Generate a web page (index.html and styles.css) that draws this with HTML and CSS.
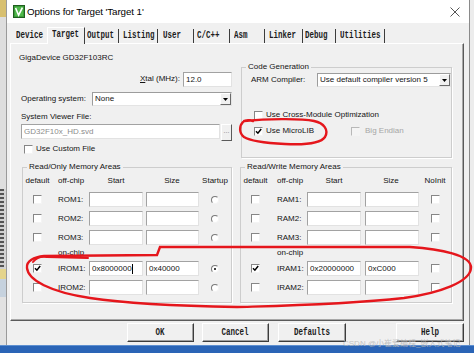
FILE: index.html
```html
<!DOCTYPE html>
<html lang="en">
<head>
<meta charset="utf-8">
<title>Options for Target 'Target 1'</title>
<link rel="stylesheet" href="styles.css">
</head>
<body>
<div class="screen">
  <div class="main">
    <div class="lstrip">
      <div class="ls-a"></div>
      <div class="ls-b"></div>
      <div class="ls-c"></div>
      <div class="ls-d"></div>
      <div class="ls-e"></div>
      <div class="ls-f"></div>
    </div>
    <div class="dialog">
      <div class="titlebar">
        <svg class="appicon" width="12" height="13" viewBox="0 0 12 13">
          <rect x="0.5" y="0.5" width="11" height="12" fill="#3c9c3a" stroke="#1f5f1f"/>
          <rect x="2" y="2" width="8" height="9" fill="#4fb84a"/>
          <path d="M2.6 3 L5.6 10.2 L9.4 2.6" fill="none" stroke="#fff" stroke-width="1.6"/>
        </svg>
        <span class="title">Options for Target 'Target 1'</span>
        <svg class="close" width="10" height="10" viewBox="0 0 10 10">
          <path d="M0.5 0.5 L9.5 9.5 M9.5 0.5 L0.5 9.5" stroke="#555" stroke-width="1"/>
        </svg>
      </div>
      <div class="body">
        <div class="tabs">
          <div class="tab t-device"><span class="mono">Device</span></div>
          <div class="tab sel t-target"><span class="mono">Target</span></div>
          <div class="tab t-output"><span class="mono">Output</span></div>
          <div class="tab t-listing"><span class="mono">Listing</span></div>
          <div class="tab t-user"><span class="mono">User</span></div>
          <div class="tab t-cpp"><span class="mono">C/C++</span></div>
          <div class="tab t-asm"><span class="mono">Asm</span></div>
          <div class="tab t-linker"><span class="mono">Linker</span></div>
          <div class="tab t-debug"><span class="mono">Debug</span></div>
          <div class="tab t-util"><span class="mono">Utilities</span></div>
        </div>
        <div class="panel">
          <div class="top">
            <div class="leftcol">
              <div class="device">GigaDevice GD32F103RC</div>
              <div class="xtal-row">
                <span><span class="u">X</span>tal (MHz):</span>
                <div class="in xtal">12.0</div>
              </div>
              <div class="os-row">
                <span class="oslabel">Operating system:</span>
                <div class="combo os"><span class="ctext">None</span><span class="drop"><svg width="5" height="3" viewBox="0 0 5 3"><path d="M0 0 H5 L2.5 3 Z" fill="#000"/></svg></span></div>
              </div>
              <div class="svf-label">System Viewer File:</div>
              <div class="svf-row">
                <div class="in svf">GD32F10x_HD.svd</div>
                <div class="dots">...</div>
              </div>
              <div class="chk-row custom">
                <span class="cb"></span><span>Use Custom File</span>
              </div>
            </div>
            <fieldset class="codegen">
              <legend>Code Generation</legend>
              <div class="arm-row">
                <span class="armlabel">ARM Compiler:</span>
                <div class="combo arm"><span class="ctext">Use default compiler version 5</span><span class="drop"><svg width="5" height="3" viewBox="0 0 5 3"><path d="M0 0 H5 L2.5 3 Z" fill="#000"/></svg></span></div>
              </div>
              <div class="chk-row cross">
                <span class="cb"></span><span>Use Cross-Module Optimization</span>
              </div>
              <div class="chk-row micro">
                <span class="cb on"><svg width="7" height="7" viewBox="0 0 7 7"><path d="M1 3.2 L2.9 5.2 L6.2 1" fill="none" stroke="#000" stroke-width="1.5"/></svg></span><span>Use MicroLIB</span>
                <span class="big"><span class="cb dis"></span><span class="distext">Big Endian</span></span>
              </div>
            </fieldset>
          </div>
          <div class="groups">
            <fieldset class="grp">
              <legend>Read/Only Memory Areas</legend>
              <div class="mem ro">
                <span class="hd c">default</span><span class="hd lbl">off-chip</span><span class="hd c">Start</span><span class="hd c sz">Size</span><span class="hd c">Startup</span>

                <span class="cell"><span class="cb"></span></span><span class="lbl">ROM1:</span><div class="in"></div><div class="in size"></div><span class="cell"><span class="rb"></span></span>
                <span class="cell"><span class="cb"></span></span><span class="lbl">ROM2:</span><div class="in"></div><div class="in size"></div><span class="cell"><span class="rb"></span></span>
                <span class="cell"><span class="cb"></span></span><span class="lbl">ROM3:</span><div class="in"></div><div class="in size"></div><span class="cell"><span class="rb"></span></span>
                <span class="lbl onchip">on-chip</span>
                <span class="cell"><span class="cb on"><svg width="7" height="7" viewBox="0 0 7 7"><path d="M1 3.2 L2.9 5.2 L6.2 1" fill="none" stroke="#000" stroke-width="1.5"/></svg></span></span><span class="lbl">IROM1:</span><div class="in">0x8000000<span class="caret"></span></div><div class="in size">0x40000</div><span class="cell"><span class="rb on"><span class="dot"></span></span></span>
                <span class="cell"><span class="cb"></span></span><span class="lbl">IROM2:</span><div class="in"></div><div class="in size"></div><span class="cell"><span class="rb"></span></span>
              </div>
            </fieldset>
            <fieldset class="grp">
              <legend>Read/Write Memory Areas</legend>
              <div class="mem rw">
                <span class="hd c">default</span><span class="hd lbl">off-chip</span><span class="hd c">Start</span><span class="hd c sz">Size</span><span class="hd c">NoInit</span>

                <span class="cell"><span class="cb"></span></span><span class="lbl">RAM1:</span><div class="in"></div><div class="in size"></div><span class="cell"><span class="cb"></span></span>
                <span class="cell"><span class="cb"></span></span><span class="lbl">RAM2:</span><div class="in"></div><div class="in size"></div><span class="cell"><span class="cb"></span></span>
                <span class="cell"><span class="cb"></span></span><span class="lbl">RAM3:</span><div class="in"></div><div class="in size"></div><span class="cell"><span class="cb"></span></span>
                <span class="lbl onchip">on-chip</span>
                <span class="cell"><span class="cb on"><svg width="7" height="7" viewBox="0 0 7 7"><path d="M1 3.2 L2.9 5.2 L6.2 1" fill="none" stroke="#000" stroke-width="1.5"/></svg></span></span><span class="lbl">IRAM1:</span><div class="in">0x20000000</div><div class="in size">0xC000</div><span class="cell"><span class="cb"></span></span>
                <span class="cell"><span class="cb"></span></span><span class="lbl">IRAM2:</span><div class="in"></div><div class="in size"></div><span class="cell"><span class="cb"></span></span>
              </div>
            </fieldset>
          </div>
        </div>
        <div class="buttons">
          <div class="btn b-ok"><span class="mono">OK</span></div>
          <div class="btn b-cancel"><span class="mono">Cancel</span></div>
          <div class="btn b-def"><span class="mono">Defaults</span></div>
          <div class="btn b-help"><span class="mono">Help</span></div>
        </div>
      </div>
    </div>
    <div class="rstrip"></div>
  </div>
  <div class="taskbar"></div>

  <svg class="marks" width="474" height="353" viewBox="0 0 474 353">
    <path d="M244 121 C265 119 300 118 314 121 C324 123 329 130 325 137 C321 143 305 145 285 144 C265 143 250 141 244 137 C239 133 239 126 243 122 C246 119 250 120 253 121" fill="none" stroke="#e5161c" stroke-width="2.4" stroke-linecap="round"/>
    <path d="M44 256 L157 255 L160 247 L410 247 C440 249 472 255 471 268 C470 282 440 293 404 298 C340 305 270 306 237 307 C180 306 130 304 90 298 C50 292 28 280 27 268 C26 261 34 257 44 256" fill="none" stroke="#e5161c" stroke-width="2.4" stroke-linecap="round"/>
    <path d="M33 262 C36 258 40 256 47 257 L88 258" fill="none" stroke="#e5161c" stroke-width="2" stroke-linecap="round"/>
  </svg>
  <div class="watermark">CSDN @小崔爱编程_嵌入式笔记</div>
</div>
</body>
</html>
```

FILE: styles.css
```css
* { box-sizing: border-box; }

html, body {
  margin: 0;
  padding: 0;
}

body {
  width: 474px;
  height: 353px;
  overflow: hidden;
  font-family: "Liberation Sans", Arial, sans-serif;
  font-size: 8px;
  line-height: 10px;
  color: #141414;
  background: #e6e6e6;
}

.screen {
  position: relative;
  width: 474px;
  height: 353px;
}

.main {
  display: flex;
  height: 345px;
}

/* left desktop strip */
.lstrip {
  width: 6px;
  display: flex;
  flex-direction: column;
  background: #d4d4d4;
}
.ls-a { height: 17px; background: #d8c070; }
.ls-b { height: 172px; background: #dedede; }
.ls-c {
  height: 80px;
  background: repeating-linear-gradient(to bottom, #555 0 2px, #cfcfcf 2px 4px);
  width: 4px;
}
.ls-d { height: 10px; background: #e4d48c; }
.ls-e { height: 18px; background: #c6d2de; }
.ls-f { flex: 1; background: #e2e2e2; }

.rstrip {
  width: 4px;
  background: #ececec;
}

/* dialog */
.dialog {
  width: 464px;
  display: flex;
  flex-direction: column;
  border-left: 1px solid #9a9a9a;
  border-right: 1px solid #8a8a8a;
  background: #f0f0f0;
}

.titlebar {
  height: 23px;
  background: #fff;
  display: flex;
  align-items: center;
  padding-left: 6px;
}
.appicon { display: block; margin-top: -1px; }
.title {
  margin-left: 2px;
  font-size: 9.8px;
  color: #000;
  letter-spacing: -0.1px;
}
.close {
  margin-left: auto;
  margin-right: 9px;
}

.body {
  flex: 1;
  display: flex;
  flex-direction: column;
}

/* tabs */
.tabs {
  height: 20px;
  display: flex;
  align-items: flex-end;
  padding-left: 5px;
}
.tab {
  height: 14px;
  padding-left: 4px;
  border-right: 1px solid #3c3c3c;
  display: flex;
  align-items: center;
  overflow: hidden;
}
.tab.sel {
  height: 17px;
  border-left: 1px solid #fff;
  border-top: 1px solid #fff;
  margin-bottom: -1px;
  position: relative;
  z-index: 1;
  background: #f0f0f0;
  align-items: flex-start;
  padding-top: 2px;
}
.t-device { width: 35px; border-right: none; }
.t-target { width: 38px; }
.t-output { width: 34px; padding-left: 2px; }
.t-listing { width: 39px; }
.t-user { width: 36px; padding-left: 5px; }
.t-cpp { width: 36px; padding-left: 3px; }
.t-asm { width: 35px; }
.t-linker { width: 38px; }
.t-debug { width: 33px; padding-left: 2px; }
.t-util { width: 49px; }

.mono {
  display: inline-block;
  font-family: "Liberation Mono", "DejaVu Sans Mono", monospace;
  font-weight: bold;
  font-size: 10px;
  line-height: 10px;
  color: #1c1c1c;
  transform: scaleX(0.75);
  transform-origin: left center;
  white-space: nowrap;
}

/* panel */
.panel {
  margin-left: 3px;
  width: 454px;
  height: 278px;
  border-top: 1px solid #fff;
  border-left: 1px solid #fff;
  border-right: 1px solid #5a5a5a;
  border-bottom: 1px solid #5a5a5a;
  box-shadow: inset -1px -1px 0 #a8a8a8;
}

.top {
  height: 118px;
  display: grid;
  grid-template-columns: 213px 211px;
  column-gap: 9px;
  padding-left: 8px;
}

.leftcol {
  display: flex;
  flex-direction: column;
}
.device {
  margin-top: 9px;
  height: 10px;
}
.xtal-row {
  margin-top: 9px;
  height: 14px;
  display: flex;
  align-items: center;
  justify-content: flex-end;
  gap: 3px;
}
.u { text-decoration: underline; }
.xtal { width: 49px; height: 14px; }

.os-row {
  margin-top: 6px;
  height: 14px;
  display: flex;
  align-items: center;
}
.oslabel { margin-left: 2px; }
.combo {
  height: 14px;
  display: flex;
  align-items: center;
  background: #fff;
  border: 1px solid;
  border-color: #9c9c9c #e4e4e4 #e4e4e4 #9c9c9c;
}
.combo .ctext {
  flex: 1;
  padding-left: 2px;
  white-space: nowrap;
  overflow: hidden;
}
.drop {
  width: 11px;
  height: 12px;
  background: #f0f0f0;
  border: 1px solid;
  border-color: #fff #6a6a6a #6a6a6a #fff;
  display: flex;
  align-items: center;
  justify-content: center;
}
.drop svg { display: block; }
.os { width: 140px; margin-left: auto; }

.svf-label {
  margin-top: 6px;
  margin-left: 2px;
  height: 10px;
}
.svf-row {
  margin-top: 2px;
  height: 17px;
  display: flex;
  gap: 1px;
  margin-left: 2px;
}
.svf {
  width: 199px;
  height: 17px;
  background: #f2f2f2;
  color: #8c8c8c;
  line-height: 15px;
}
.dots {
  width: 11px;
  height: 17px;
  border: 1px solid;
  border-color: #fff #5a5a5a #5a5a5a #fff;
  color: #7a7a7a;
  font-size: 7px;
  line-height: 12px;
  text-align: center;
}

.chk-row {
  height: 10px;
  display: flex;
  align-items: center;
  gap: 3px;
  white-space: nowrap;
}
.custom { margin-top: 3px; margin-left: 5px; }

/* inputs */
.in {
  height: 15px;
  background: #fff;
  border: 1px solid;
  border-color: #a2a2a2 #e2e2e2 #e2e2e2 #a2a2a2;
  padding-left: 2px;
  line-height: 13px;
  white-space: nowrap;
  overflow: hidden;
  display: flex;
  align-items: center;
}
.caret {
  display: inline-block;
  width: 1px;
  height: 10px;
  background: #000;
}

/* checkbox & radio */
.cb {
  width: 9px;
  height: 9px;
  flex: none;
  background: #fff;
  border: 1px solid;
  border-color: #868686 #f4f4f4 #f4f4f4 #868686;
  display: flex;
  align-items: center;
  justify-content: center;
}
.cb svg { display: block; }
.cb.dis { border-color: #b8b8b8 #f4f4f4 #f4f4f4 #b8b8b8; background: #f4f4f4; }
.distext { color: #a6a6a6; }

.rb {
  width: 8px;
  height: 8px;
  border-radius: 50%;
  background: #fff;
  border: 1px solid;
  border-color: #7a7a7a #f4f4f4 #f4f4f4 #7a7a7a;
  display: flex;
  align-items: center;
  justify-content: center;
}
.rb .dot {
  width: 2px;
  height: 2px;
  background: #000;
  border-radius: 50%;
}

/* fieldsets */
fieldset {
  margin: 0;
  padding: 0;
  min-width: 0;
  border: 1px solid #cdcdcd;
  box-shadow: 1px 1px 0 #fff;
}
legend {
  padding: 0 2px;
  margin-left: 4px;
  font-size: 8px;
  line-height: 10px;
}

.codegen {
  margin-top: 18px;
  height: 96px;
  width: 211px;
}
.arm-row {
  margin-top: 1px;
  height: 14px;
  display: flex;
  align-items: center;
}
.armlabel { margin-left: 9px; }
.arm { width: 134px; margin-left: auto; margin-right: 0; }
.cross { margin-top: 23px; margin-left: 12px; }
.micro { margin-top: 6px; margin-left: 12px; }
.big {
  margin-left: 34px;
  display: flex;
  align-items: center;
  gap: 5px;
}

.groups {
  display: grid;
  grid-template-columns: 210px 212px;
  column-gap: 8px;
  padding-left: 11px;
}
.grp { height: 141px; }

.mem {
  display: grid;
  grid-template-rows: 18px 19px 19px 19px 12px 19px 19px;
  align-items: center;
}
.mem.ro { grid-template-columns: 29px 37px 54px 56px 1fr; }
.mem.rw { grid-template-columns: 29px 37px 54px 58px 1fr; }
.mem .in.size { margin-left: 3px; }
.mem.rw .in.size { margin-left: 4px; }
.hd { white-space: nowrap; }
.c { text-align: center; }
.hd.sz { padding-left: 2px; }
.lbl { padding-left: 6px; white-space: nowrap; }
.mem.rw .lbl { padding-left: 7px; }
.onchip { grid-column: 2 / -1; }
.cell {
  display: flex;
  justify-content: center;
  align-items: center;
}

/* buttons */
.buttons {
  margin-top: 2px;
  height: 19px;
  display: flex;
}
.btn {
  width: 67px;
  height: 19px;
  background: #f0f0f0;
  border: 1px solid;
  border-color: #fff #3c3c3c #3c3c3c #fff;
  box-shadow: inset -1px -1px 0 #a0a0a0;
  display: flex;
  align-items: center;
  justify-content: center;
}
.btn .mono { transform-origin: center center; }
.b-ok { margin-left: 120px; }
.b-cancel { margin-left: 8px; }
.b-def { margin-left: 9px; width: 68px; }
.b-help { margin-left: 50px; width: 68px; }

.taskbar {
  height: 8px;
  background: #2a64b6;
  border-top: 1px solid #5d8fd0;
}

/* annotations */
.marks {
  position: absolute;
  left: 0;
  top: 0;
  pointer-events: none;
}
.watermark {
  position: absolute;
  left: 343px;
  top: 339px;
  font-family: "Liberation Sans", "Noto Sans CJK SC", sans-serif;
  font-size: 8px;
  line-height: 10px;
  color: rgba(185, 185, 185, 0.85);
  white-space: nowrap;
}
```
